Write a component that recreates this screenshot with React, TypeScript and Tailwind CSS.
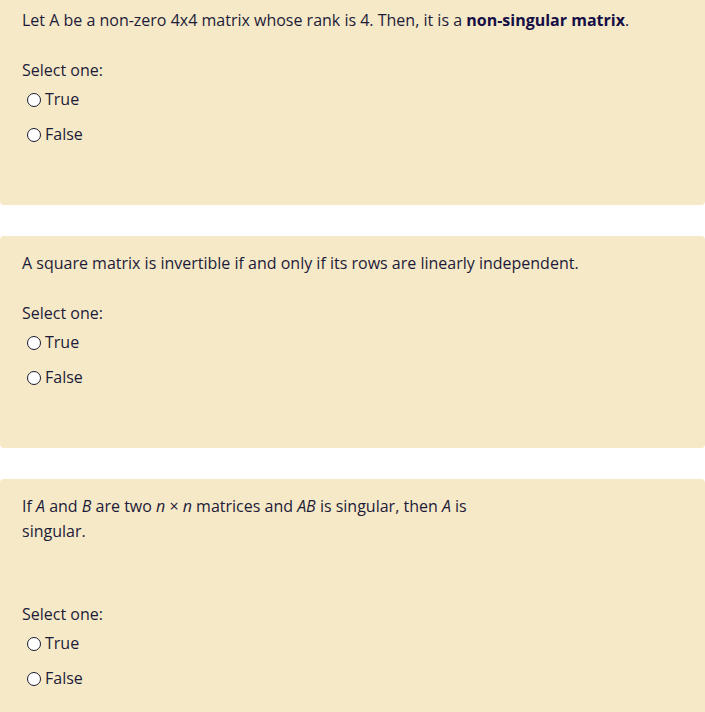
import React from "react";

function Radio({ label }: { label: string }) {
  return (
    <label className="flex h-[35px] items-center pl-[5px]">
      <span className="mr-[4px] inline-block h-[14px] w-[14px] rounded-full border-[1.5px] border-[#1c1a2e] bg-white" />
      <span>{label}</span>
    </label>
  );
}

function Question({ children, extra }: { children: React.ReactNode; extra?: boolean }) {
  return (
    <div className="rounded-[4px] bg-[#f5e9c8] px-[22px] pb-[53px] pt-[15px]">
      <div className={extra ? "max-w-[470px] pb-[33px]" : ""}>{children}</div>
      <div className="mt-[25px]">Select one:</div>
      <div className="-mt-px">
        <Radio label="True" />
        <Radio label="False" />
      </div>
    </div>
  );
}

export default function App() {
  return (
    <div
      className="h-[712px] overflow-hidden bg-white text-[16px] leading-[25px] text-[#1d1b38]"
      style={{ fontFamily: '"Open Sans", "Noto Sans", sans-serif' }}
    >
      <div className="-mt-[7px] flex flex-col gap-[31px]">
        <Question>
          Let A be a non-zero 4x4 matrix whose rank is 4. Then, it is a{" "}
          <b className="font-bold text-[#150f45]">non-singular matrix</b>.
        </Question>
        <Question>A square matrix is invertible if and only if its rows are linearly independent.</Question>
        <Question extra>
          If <i>A</i> and <i>B</i> are two <i>n</i> × <i>n</i> matrices and <i>AB</i> is singular, then <i>A</i> is
          singular.
        </Question>
      </div>
    </div>
  );
}
